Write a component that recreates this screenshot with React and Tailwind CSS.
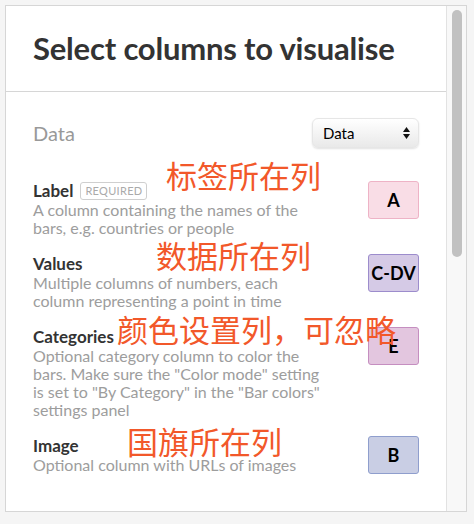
import React from 'react';

const ROWS = [
  {
    title: 'Label',
    required: true,
    lines: ['A column containing the names of the', 'bars, e.g. countries or people'],
    badge: 'A',
    badgeCls: 'bg-[#f9dde6] border-[#eeb3c6]',
  },
  {
    title: 'Values',
    lines: ['Multiple columns of numbers, each', 'column representing a point in time'],
    badge: 'C-DV',
    badgeCls: 'bg-[#d5cae6] border-[#9c8ccc]',
  },
  {
    title: 'Categories',
    lines: [
      'Optional category column to color the',
      'bars. Make sure the "Color mode" setting',
      'is set to "By Category" in the "Bar colors"',
      'settings panel',
    ],
    badge: 'E',
    badgeCls: 'bg-[#e3c6df] border-[#c58ec0]',
  },
  {
    title: 'Image',
    lines: ['Optional column with URLs of images'],
    badge: 'B',
    badgeCls: 'bg-[#c9cee4] border-[#8f9ecd]',
  },
];

const NOTES = [
  { text: '标签所在列', cls: 'left-[166px] top-[159px]' },
  { text: '数据所在列', cls: 'left-[156px] top-[239px]' },
  { text: '颜色设置列，可忽略', cls: 'left-[117px] top-[313px]' },
  { text: '国旗所在列', cls: 'left-[127px] top-[425px]' },
];

function Row({ row }) {
  return (
    <div className="flex items-start justify-between mb-[17px]">
      <div>
        <div className="flex items-center gap-[7px] h-[20px]">
          <span className="text-[17px] font-bold text-[#333]">{row.title}</span>
          {row.required && (
            <span className="border border-[#cfcfcf] rounded-[3px] px-[4px] h-[18px] leading-[16px] text-[11px] tracking-[0.3px] text-[#aaa]">
              REQUIRED
            </span>
          )}
        </div>
        {row.lines.map((l) => (
          <div key={l} className="text-[16px] leading-[18px] text-[#9d9d9d] whitespace-nowrap">
            {l}
          </div>
        ))}
      </div>
      <div
        className={`w-[51px] h-[38px] rounded-[3px] border flex items-center justify-center text-[18px] font-bold text-black ${row.badgeCls}`}
      >
        {row.badge}
      </div>
    </div>
  );
}

export default function App() {
  return (
    <div
      className="relative w-[474px] h-[524px] bg-[#f5f5f5] pt-[5px] pl-[5px]"
      style={{ fontFamily: 'Lato, "Noto Sans CJK SC", sans-serif' }}
    >
      <div className="flex w-[462px] h-[507px] bg-white border border-[#d6d6d6]">
        {/* Main content */}
        <div className="flex-1 border-r border-[#e2e2e2]">
          <div className="h-[86px] border-b border-[#d6d6d6] flex items-center px-[27px]">
            <h1 className="text-[31px] font-bold text-[#333] tracking-[-0.2px]">Select columns to visualise</h1>
          </div>

          <div className="px-[27px] pt-[26px]">
            <div className="flex items-center justify-between h-[30px] mb-[33px]">
              <span className="text-[20px] text-[#999]">Data</span>
              <div className="w-[107px] h-[30px] rounded-[6px] border border-[#e6e6e6] bg-gradient-to-b from-white to-[#e9e9e9] shadow-[0_1px_2px_rgba(0,0,0,0.12)] flex items-center justify-between pl-[10px] pr-[7px]">
                <span className="text-[15px] text-black">Data</span>
                <svg width="9" height="14" viewBox="0 0 9 14">
                  <path d="M4.5 1 L8 6 L1 6 Z" fill="#111" />
                  <path d="M4.5 13 L8 8 L1 8 Z" fill="#111" />
                </svg>
              </div>
            </div>

            {ROWS.map((r) => (
              <Row key={r.title} row={r} />
            ))}
          </div>
        </div>

        {/* Scrollbar */}
        <div className="w-[19px] bg-[#f8f8f8] pt-[4px] flex justify-center">
          <div className="w-[10px] h-[247px] rounded-full bg-[#c1c1c1]" />
        </div>
      </div>

      {NOTES.map((n) => (
        <span
          key={n.text}
          className={`absolute ${n.cls} text-[31px] leading-none text-[#f2582a] whitespace-nowrap`}
          style={{ fontFamily: '"Noto Sans CJK SC", sans-serif' }}
        >
          {n.text}
        </span>
      ))}
    </div>
  );
}
